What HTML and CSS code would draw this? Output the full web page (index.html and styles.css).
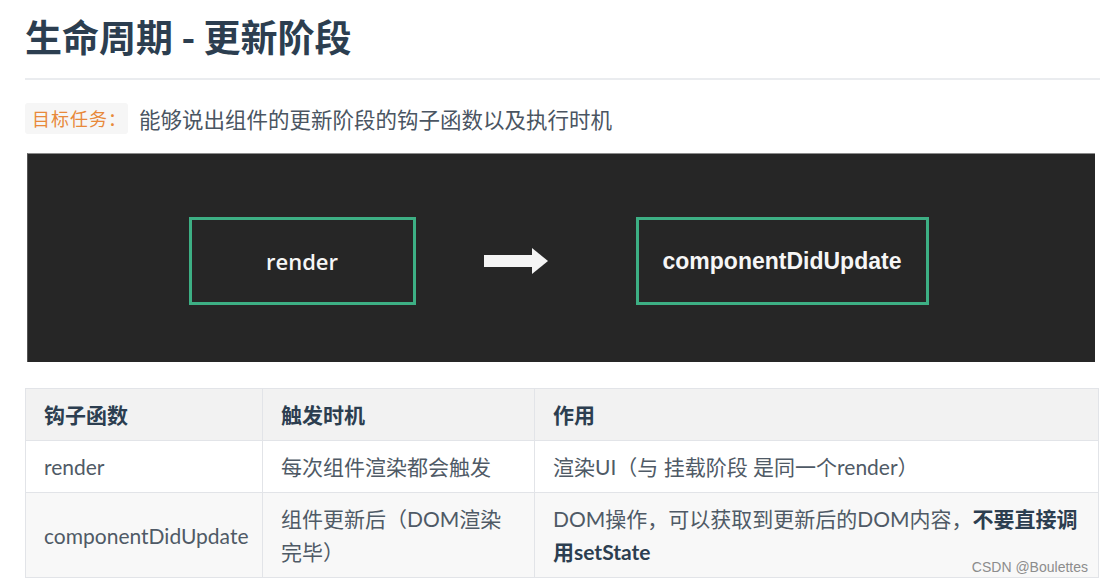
FILE: index.html
```html
<!DOCTYPE html>
<html lang="zh-CN">
  <head>
    <meta charset="UTF-8" />
    <meta name="viewport" content="width=device-width, initial-scale=1.0" />
    <title>生命周期 - 更新阶段</title>
    <link rel="stylesheet" href="styles.css">
  </head>
  <body>
    <div class="page">
      <h1 class="title">生命周期 - 更新阶段</h1>

      <div class="goal">
        <span class="goal-label">目标任务：</span>
        <span class="goal-text">能够说出组件的更新阶段的钩子函数以及执行时机</span>
      </div>

      <div class="diagram">
        <div class="stage stage-render">render</div>
        <svg class="arrow" width="64" height="26" viewBox="0 0 64 26">
          <rect x="0" y="7" width="50" height="12" fill="#f4f4f4" />
          <polygon points="48,0 64,13 48,26" fill="#f4f4f4" />
        </svg>
        <div class="stage stage-update">componentDidUpdate</div>
      </div>

      <table class="hooks">
        <colgroup>
          <col class="col-hook" />
          <col class="col-when" />
          <col />
        </colgroup>
        <thead>
          <tr>
            <th>钩子函数</th>
            <th>触发时机</th>
            <th>作用</th>
          </tr>
        </thead>
        <tbody>
          <tr>
            <td>render</td>
            <td>每次组件渲染都会触发</td>
            <td>渲染UI（与 挂载阶段 是同一个render）</td>
          </tr>
          <tr class="alt">
            <td>componentDidUpdate</td>
            <td>组件更新后（DOM渲染完毕）</td>
            <td class="last-cell">
              <span class="line">DOM操作，可以获取到更新后的DOM内容，<strong>不要直接调</strong></span><strong>用setState</strong>
              <span class="watermark">CSDN @Boulettes</span>
            </td>
          </tr>
        </tbody>
      </table>
    </div>
  </body>
</html>
```

FILE: styles.css
```css
:root {
  --heading: #2c3e50;
  --text: #4f5a66;
  --border: #e2e4e8;
  --green: #3daf84;
  --orange: #e8893a;
  --dark: #262626;
}

* {
  margin: 0;
  padding: 0;
  box-sizing: border-box;
}

body {
  background: #ffffff;
  font-family: "Noto Sans CJK SC", "Noto Sans", sans-serif;
  color: var(--text);
}

.page {
  padding: 14px 3px 0 25px;
}

.title {
  font-size: 37px;
  line-height: 45px;
  font-weight: 700;
  color: var(--heading);
  padding-bottom: 19px;
  border-bottom: 2px solid #eaecef;
}

.goal {
  display: flex;
  align-items: center;
  margin-top: 23px;
}

.goal-label {
  background: #f6f6f6;
  color: var(--orange);
  font-size: 18px;
  line-height: 31px;
  letter-spacing: 1px;
  padding: 0 1px 0 7px;
  border-radius: 3px;
}

.goal-text {
  margin-left: 11px;
  font-size: 21.5px;
  line-height: 31px;
  color: #4a5562;
}

.diagram {
  display: flex;
  align-items: center;
  justify-content: center;
  gap: 68px;
  margin: 19px 5px 0 2px;
  padding-right: 6px;
  height: 209px;
  background: var(--dark);
  border-top: 1px solid #8a8a8a;
  border-left: 1px solid #555555;
}

.stage {
  display: flex;
  align-items: center;
  justify-content: center;
  height: 88px;
  border: 3px solid var(--green);
  color: #f6f6f6;
  font-size: 22px;
  font-weight: 700;
  margin-top: 6px;
}

.stage-render {
  width: 227px;
  font-family: "Open Sans", sans-serif;
  font-weight: 600;
}

.stage-update {
  width: 293px;
  margin-left: 20px;
  font-family: "Liberation Sans", Arial, sans-serif;
  font-size: 23px;
}

.arrow {
  margin-top: 6px;
}

.hooks {
  width: 1074px;
  margin-top: 26px;
  table-layout: fixed;
  border-collapse: collapse;
  font-family: Lato, "Noto Sans CJK SC", sans-serif;
  font-size: 21px;
  line-height: 33px;
}

.col-hook {
  width: 237px;
}

.col-when {
  width: 272px;
}

.hooks th,
.hooks td {
  border: 1px solid var(--border);
  padding: 9px 18px;
  text-align: left;
  vertical-align: middle;
}

.hooks th {
  background: #f2f2f2;
  color: var(--heading);
  font-weight: 700;
}

.hooks .alt td {
  background: #f8f8f8;
}

.hooks strong {
  color: var(--heading);
  font-weight: 700;
}

.last-cell {
  position: relative;
}

.last-cell .line {
  display: block;
  white-space: nowrap;
}

.watermark {
  position: absolute;
  right: 10px;
  bottom: 1px;
  font-family: "Liberation Sans", Arial, sans-serif;
  font-size: 14px;
  line-height: 17px;
  color: #8c8c8c;
}
```
